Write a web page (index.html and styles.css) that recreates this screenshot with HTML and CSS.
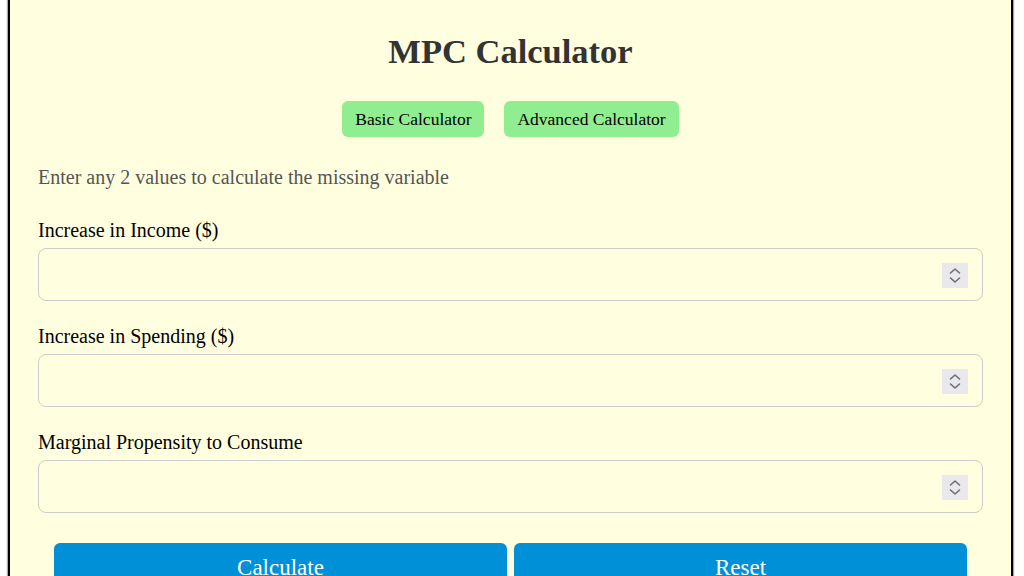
FILE: index.html
```html
<!DOCTYPE html>
<html lang="en">
<head>
<meta charset="utf-8">
<title>MPC Calculator</title>
<link rel="stylesheet" href="styles.css">
</head>
<body>
<div class="container">
  <h1 class="title">MPC Calculator</h1>
  <div class="mode-row">
    <button class="mode-btn" type="button">Basic Calculator</button>
    <button class="mode-btn" type="button">Advanced Calculator</button>
  </div>
  <p class="intro">Enter any 2 values to calculate the missing variable</p>
  <div class="group">
    <label class="label" for="income">Increase in Income ($)</label>
    <div class="field-wrap">
      <input class="field" id="income" type="number">
      <span class="spinner" aria-hidden="true">
        <svg width="26" height="25" viewBox="0 0 26 25"><path d="M8.5 10 L13 6 L17.5 10" fill="none" stroke="#6f6f73" stroke-width="1.6" stroke-linecap="round" stroke-linejoin="round"/><path d="M8.5 15 L13 19 L17.5 15" fill="none" stroke="#6f6f73" stroke-width="1.6" stroke-linecap="round" stroke-linejoin="round"/></svg>
      </span>
    </div>
  </div>
  <div class="group">
    <label class="label" for="spending">Increase in Spending ($)</label>
    <div class="field-wrap">
      <input class="field" id="spending" type="number">
      <span class="spinner" aria-hidden="true">
        <svg width="26" height="25" viewBox="0 0 26 25"><path d="M8.5 10 L13 6 L17.5 10" fill="none" stroke="#6f6f73" stroke-width="1.6" stroke-linecap="round" stroke-linejoin="round"/><path d="M8.5 15 L13 19 L17.5 15" fill="none" stroke="#6f6f73" stroke-width="1.6" stroke-linecap="round" stroke-linejoin="round"/></svg>
      </span>
    </div>
  </div>
  <div class="group">
    <label class="label" for="mpc">Marginal Propensity to Consume</label>
    <div class="field-wrap">
      <input class="field" id="mpc" type="number">
      <span class="spinner" aria-hidden="true">
        <svg width="26" height="25" viewBox="0 0 26 25"><path d="M8.5 10 L13 6 L17.5 10" fill="none" stroke="#6f6f73" stroke-width="1.6" stroke-linecap="round" stroke-linejoin="round"/><path d="M8.5 15 L13 19 L17.5 15" fill="none" stroke="#6f6f73" stroke-width="1.6" stroke-linecap="round" stroke-linejoin="round"/></svg>
      </span>
    </div>
  </div>
  <div class="action-row">
    <button class="action-btn" type="button">Calculate</button>
    <button class="action-btn" type="button">Reset</button>
  </div>
</div>
</body>
</html>
```

FILE: styles.css
```css
html, body {
  margin: 0;
  padding: 0;
  background: #ffffff;
}

body {
  font-family: "Liberation Serif", "Times New Roman", serif;
  font-size: 20px;
  color: #111;
}

.container {
  box-sizing: border-box;
  width: 1005px;
  margin-left: 8px;
  min-height: 600px;
  background: #ffffe0;
  border: 2px solid #000;
  border-top: 0;
  box-shadow: 0 0 1px 1px rgba(0, 0, 0, 0.35);
  padding: 32px 28px 20px;
}

.title {
  margin: 0 0 31px;
  font-size: 34.5px;
  line-height: 38px;
  font-weight: bold;
  color: #333;
  text-align: center;
}

.mode-row {
  display: flex;
  justify-content: center;
  gap: 20px;
}

.mode-btn {
  font-family: "Liberation Serif", "Times New Roman", serif;
  font-size: 17.5px;
  line-height: 20px;
  padding: 8px 13px;
  background: #90ee90;
  color: #000;
  border: 0;
  border-radius: 6px;
}

.intro {
  margin: 29px 0 30px;
  color: #555;
  line-height: 23px;
}

.group {
  margin-bottom: 24px;
}

.label {
  display: block;
  line-height: 23px;
  margin-bottom: 6px;
  color: #000;
}

.field-wrap {
  position: relative;
}

.field {
  box-sizing: border-box;
  display: block;
  width: 100%;
  height: 53px;
  padding: 14px 15px;
  font-family: "Liberation Serif", "Times New Roman", serif;
  font-size: 20px;
  background: transparent;
  border: 1px solid #ccc;
  border-radius: 8px;
  outline: none;
  -moz-appearance: textfield;
}

.field::-webkit-inner-spin-button,
.field::-webkit-outer-spin-button {
  -webkit-appearance: none;
  margin: 0;
}

.spinner {
  position: absolute;
  top: 15px;
  right: 15px;
  width: 26px;
  height: 25px;
  background: #e9e9ed;
  display: flex;
  pointer-events: none;
}

.action-row {
  display: flex;
  justify-content: center;
  gap: 7px;
  margin-top: 30px;
}

.action-btn {
  width: 453px;
  height: 50px;
  font-family: "Liberation Serif", "Times New Roman", serif;
  font-size: 23px;
  line-height: 26px;
  color: #fff;
  background: #0090d8;
  border: 0;
  border-radius: 6px;
  padding: 0;
}
```
